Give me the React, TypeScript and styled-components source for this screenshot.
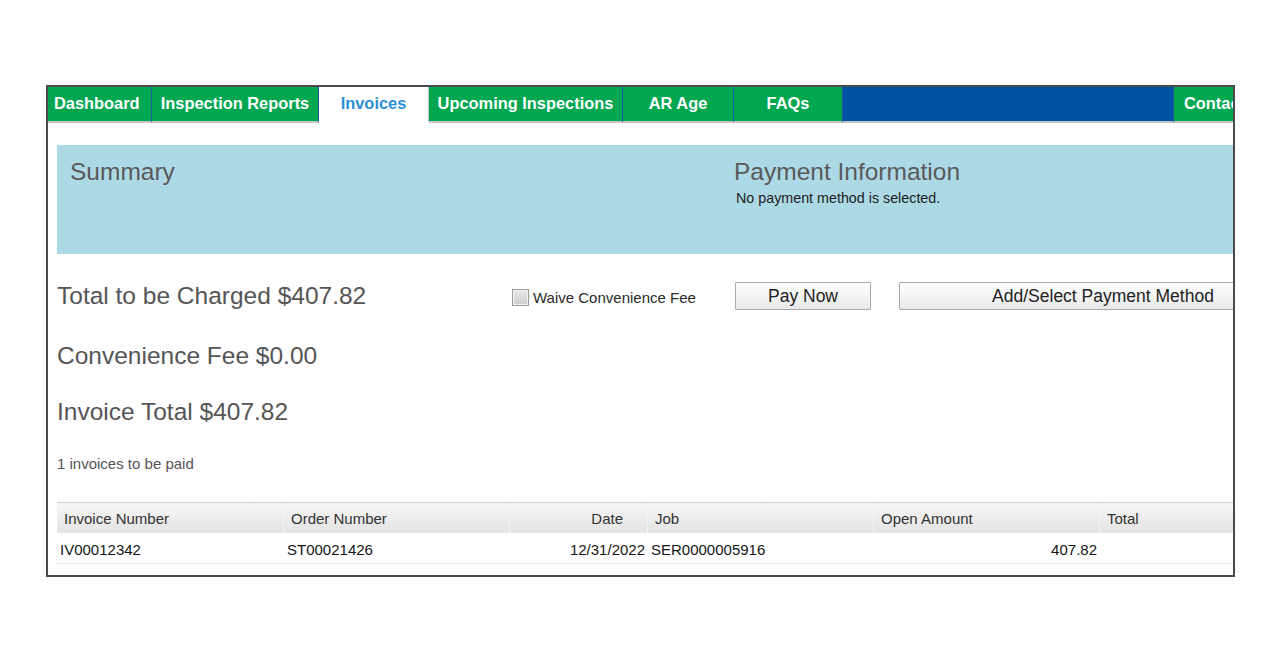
import styled, { createGlobalStyle } from 'styled-components';

const GlobalStyle = createGlobalStyle`
    html, body {
        margin: 0;
        padding: 0;
        background: #ffffff;
        font-family: "Liberation Sans", Arial, sans-serif;
    }
`;

const Page = styled.div`
    width: 1280px;
    height: 662px;
    padding: 85px 0 0 46px;
    box-sizing: border-box;
`;

const Frame = styled.div`
    width: 1189px;
    height: 492px;
    border: 2px solid #4a4a4a;
    box-sizing: border-box;
    overflow: hidden;
    background: #ffffff;
`;

const TabBar = styled.div`
    display: flex;
    height: 36px;
    width: 1400px;
`;

const Tab = styled.div<{ $w: number; $active?: boolean; $fill?: boolean; $align?: string; $pl?: number }>`
    flex: 0 0 ${(p) => p.$w}px;
    box-sizing: border-box;
    display: flex;
    align-items: center;
    justify-content: ${(p) => p.$align || 'center'};
    padding: 0 6px 2px ${(p) => p.$pl ?? 6}px;
    font-size: 16.4px;
    font-weight: 700;
    white-space: nowrap;
    background: ${(p) => (p.$active ? '#ffffff' : p.$fill ? '#0052a3' : '#00a650')};
    color: ${(p) => (p.$active ? '#2b8fd6' : '#ffffff')};
    border-right: 1px solid ${(p) => (p.$active ? '#c8c8c8' : '#1d5aa0')};
    border-bottom: 2px solid ${(p) => (p.$active ? '#ffffff' : '#c6c6c6')};
`;

const Content = styled.div`
    padding: 22px 0 0 9px;
`;

const SummaryPanel = styled.div`
    display: flex;
    width: 1300px;
    height: 109px;
    background: #add8e6;
    box-sizing: border-box;
    padding: 13px 0 0 13px;
`;

const PanelColumn = styled.div<{ $w?: number }>`
    flex: 0 0 ${(p) => (p.$w ? `${p.$w}px` : 'auto')};
    display: flex;
    flex-direction: column;
`;

const PanelTitle = styled.div`
    font-size: 24.5px;
    line-height: 28px;
    color: #5a5a5a;
`;

const PanelNote = styled.div`
    font-size: 14.3px;
    line-height: 16px;
    color: #1c1c1c;
    padding: 4px 0 0 2px;
`;

const ChargeRow = styled.div`
    display: grid;
    grid-template-columns: 455px 223px 164px 420px;
    align-items: center;
    height: 28px;
    margin-top: 28px;
`;

const BigLine = styled.div<{ $top?: number }>`
    font-size: 24.5px;
    line-height: 28px;
    color: #555555;
    margin-top: ${(p) => p.$top ?? 0}px;
    white-space: nowrap;
`;

const WaiveLabel = styled.label`
    display: flex;
    align-items: center;
    gap: 4px;
    font-size: 15px;
    color: #2a2a2a;
    padding-top: 2px;
`;

const Box = styled.span`
    width: 15px;
    height: 15px;
    border: 1px solid #9a9a9a;
    background: linear-gradient(#e6e6e6, #cfcfcf);
    box-shadow: inset 0 0 0 1px #f4f4f4;
    display: inline-block;
`;

const Button = styled.button<{ $w: number }>`
    width: ${(p) => p.$w}px;
    height: 28px;
    font-family: "Liberation Sans", Arial, sans-serif;
    font-size: 17.5px;
    color: #222222;
    background: linear-gradient(#ffffff, #e9e9e9);
    border: 1px solid #a9a9a9;
    border-radius: 1px;
    padding: 0;
    white-space: nowrap;
`;

const Count = styled.div`
    font-size: 15px;
    color: #555555;
    margin-top: 29px;
`;

const Table = styled.div`
    margin-top: 30px;
    width: 1300px;
    border-top: 1px solid #c9cbd9;
`;

const Row = styled.div<{ $head?: boolean }>`
    display: grid;
    grid-template-columns: 227px 226px 138px 226px 226px 257px;
    height: ${(p) => (p.$head ? 30 : 29)}px;
    background: ${(p) => (p.$head ? 'linear-gradient(#f7f7f7, #e3e3e3)' : '#ffffff')};
    border-bottom: 1px solid ${(p) => (p.$head ? '#ffffff' : '#e6e6e6')};
`;

const Cell = styled.div<{ $head?: boolean; $right?: boolean; $pr?: number }>`
    display: flex;
    align-items: center;
    justify-content: ${(p) => (p.$right ? 'flex-end' : 'flex-start')};
    padding: ${(p) => (p.$head ? '1px 0 0 7px' : '1px 0 0 3px')};
    padding-right: ${(p) => p.$pr ?? 0}px;
    font-size: 15px;
    color: ${(p) => (p.$head ? '#333333' : '#151515')};
    border-right: ${(p) => (p.$head ? '1px solid #f4f4f4' : 'none')};
    white-space: nowrap;
`;

const tabs = [
    { label: 'Dashboard', w: 104, align: 'flex-start' },
    { label: 'Inspection Reports', w: 167 },
    { label: 'Invoices', w: 110, active: true },
    { label: 'Upcoming Inspections', w: 194 },
    { label: 'AR Age', w: 111 },
    { label: 'FAQs', w: 109 },
    { label: '', w: 331, fill: true },
    { label: 'Contact Us', w: 140, align: 'flex-start', pl: 10 },
];

export default function App() {
    return (
        <Page>
            <GlobalStyle />
            <Frame>
                <TabBar>
                    {tabs.map((t, i) => (
                        <Tab key={i} $w={t.w} $active={t.active} $fill={t.fill} $align={t.align} $pl={t.pl}>
                            {t.label}
                        </Tab>
                    ))}
                </TabBar>
                <Content>
                    <SummaryPanel>
                        <PanelColumn $w={664}>
                            <PanelTitle>Summary</PanelTitle>
                        </PanelColumn>
                        <PanelColumn>
                            <PanelTitle>Payment Information</PanelTitle>
                            <PanelNote>No payment method is selected.</PanelNote>
                        </PanelColumn>
                    </SummaryPanel>

                    <ChargeRow>
                        <BigLine>Total to be Charged $407.82</BigLine>
                        <WaiveLabel>
                            <Box />
                            Waive Convenience Fee
                        </WaiveLabel>
                        <div>
                            <Button $w={136}>Pay Now</Button>
                        </div>
                        <div>
                            <Button $w={408}>Add/Select Payment Method</Button>
                        </div>
                    </ChargeRow>
                    <BigLine $top={32}>Convenience Fee $0.00</BigLine>
                    <BigLine $top={28}>Invoice Total $407.82</BigLine>
                    <Count>1 invoices to be paid</Count>

                    <Table>
                        <Row $head>
                            <Cell $head>Invoice Number</Cell>
                            <Cell $head>Order Number</Cell>
                            <Cell $head $right $pr={24}>Date</Cell>
                            <Cell $head>Job</Cell>
                            <Cell $head>Open Amount</Cell>
                            <Cell $head>Total</Cell>
                        </Row>
                        <Row>
                            <Cell>IV00012342</Cell>
                            <Cell>ST00021426</Cell>
                            <Cell $right $pr={3}>12/31/2022</Cell>
                            <Cell>SER0000005916</Cell>
                            <Cell $right $pr={3}>407.82</Cell>
                            <Cell />
                        </Row>
                    </Table>
                </Content>
            </Frame>
        </Page>
    );
}
